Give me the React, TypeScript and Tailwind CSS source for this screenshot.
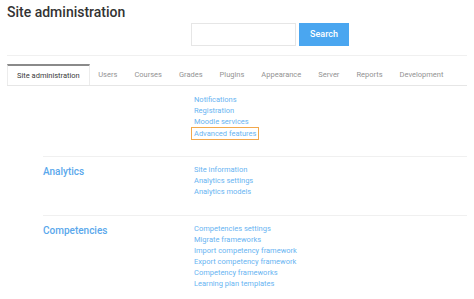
import React from 'react';

const tabs = [
  'Site administration',
  'Users',
  'Courses',
  'Grades',
  'Plugins',
  'Appearance',
  'Server',
  'Reports',
  'Development',
];

interface Section {
  title?: string;
  links: string[];
  highlight?: string;
}

const sections: Section[] = [
  {
    links: ['Notifications', 'Registration', 'Moodle services', 'Advanced features'],
    highlight: 'Advanced features',
  },
  {
    title: 'Analytics',
    links: ['Site information', 'Analytics settings', 'Analytics models'],
  },
  {
    title: 'Competencies',
    links: [
      'Competencies settings',
      'Migrate frameworks',
      'Import competency framework',
      'Export competency framework',
      'Competency frameworks',
      'Learning plan templates',
    ],
  },
];

const App: React.FC = () => {
  return (
    <div className="w-[474px] h-[299px] overflow-hidden bg-white font-['Roboto',sans-serif] px-[7px]">
      <h1 className="pt-[3px] text-[14px] leading-[18px] font-medium text-[#333]">Site administration</h1>

      <div className="mt-[2px] flex items-stretch gap-[3px] pl-[184px] pb-[9px] border-b border-[#f0f0f0]">
        <div className="w-[105px] h-[23px] border border-[#e6e6e6] bg-white" />
        <button className="w-[50px] h-[23px] bg-[#4aa6f0] text-white text-[9px] font-medium">Search</button>
      </div>

      <div className="mt-[8px] flex border-b border-[#e6e6e6]">
        {tabs.map((tab, i) => (
          <div
            key={tab}
            className={
              i === 0
                ? 'h-[21px] px-[9px] flex items-center border-t-2 border-t-[#8a8a8a] border-x border-x-[#ececec] bg-white text-[7.5px] text-[#3a3a3a] -mb-px'
                : 'h-[21px] px-[8.5px] flex items-center text-[7.5px] text-[#939393]'
            }
          >
            {tab}
          </div>
        ))}
      </div>

      <div className="pl-[36px]">
        {sections.map((s, i) => (
          <div
            key={i}
            className={
              i === 0
                ? 'flex pt-[8px] pb-[16px]'
                : 'flex pt-[7px] pb-[18px] border-t border-[#f0f0f0]'
            }
          >
            <div className="w-[151px] shrink-0 pt-[1px] text-[10px] leading-[14px] font-medium text-[#5aa8ec]">
              {s.title}
            </div>
            <ul className="flex flex-col">
              {s.links.map((l) => (
                <li
                  key={l}
                  className={
                    l === s.highlight
                      ? 'text-[7.5px] leading-[11px] text-[#68b4f2] border border-[#f2a84c] px-[2px] -mx-[3px] w-fit'
                      : 'text-[7.5px] leading-[11px] text-[#68b4f2]'
                  }
                >
                  {l}
                </li>
              ))}
            </ul>
          </div>
        ))}
      </div>
    </div>
  );
};

export default App;
